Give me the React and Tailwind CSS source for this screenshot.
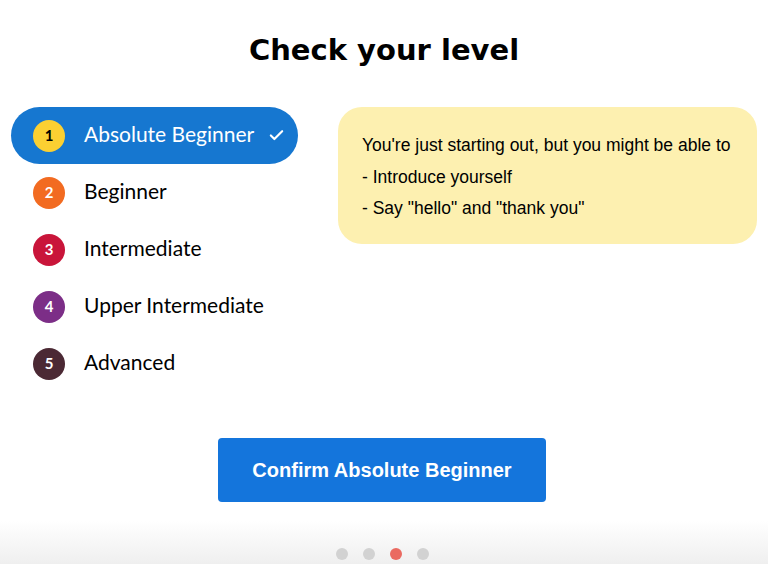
import React, { useState } from "react";
import { Check } from "lucide-react";

const levels = [
  { id: 1, name: "Absolute Beginner", color: "bg-[#fbd032]", num: "text-black" },
  { id: 2, name: "Beginner", color: "bg-[#f26b21]", num: "text-white" },
  { id: 3, name: "Intermediate", color: "bg-[#c9153a]", num: "text-white" },
  { id: 4, name: "Upper Intermediate", color: "bg-[#7c2e87]", num: "text-white" },
  { id: 5, name: "Advanced", color: "bg-[#4b2934]", num: "text-white" },
];

export default function App() {
  const [selected, setSelected] = useState(1);
  const current = levels.find((l) => l.id === selected);

  return (
    <div className="min-h-[564px] flex flex-col bg-white font-['Lato',sans-serif]">
      <h1 className="mt-[30px] text-center text-[29px] leading-[40px] font-bold text-black font-['DejaVu_Sans',sans-serif]">
        Check your level
      </h1>

      <div className="mt-[37px] flex gap-[40px] pl-[11px]">
        {/* Level list */}
        <ul className="w-[287px] flex flex-col">
          {levels.map((l) => {
            const active = l.id === selected;
            return (
              <li key={l.id}>
                <button
                  onClick={() => setSelected(l.id)}
                  className={`w-full h-[57px] flex items-center pl-[22px] pr-[13px] rounded-full text-left ${
                    active ? "bg-[#1677d0] text-white" : "text-black"
                  }`}
                >
                  <span
                    className={`w-[32px] h-[32px] rounded-full flex items-center justify-center text-[15px] font-bold shrink-0 ${l.color} ${l.num}`}
                  >
                    {l.id}
                  </span>
                  <span className="ml-[19px] mb-[5px] text-[21px] leading-none">{l.name}</span>
                  {active && <Check className="ml-auto w-[17px] h-[17px]" strokeWidth={3} />}
                </button>
              </li>
            );
          })}
        </ul>

        {/* Description */}
        <div className="w-[419px] h-[137px] self-start rounded-[24px] bg-[#fdf0b0] px-[24px] pt-[23px] font-['Liberation_Sans',Arial,sans-serif] text-[17.5px] leading-[31.5px] text-black">
          <p>You're just starting out, but you might be able to</p>
          <p>- Introduce yourself</p>
          <p>- Say "hello" and "thank you"</p>
        </div>
      </div>

      <div className="mt-[46px] flex justify-center pr-[4px]">
        <button className="w-[328px] h-[64px] rounded-[4px] bg-[#1475dc] text-white text-[20px] font-bold font-['Liberation_Sans',Arial,sans-serif]">
          Confirm {current.name}
        </button>
      </div>

      <div className="h-[62px] flex items-end justify-center gap-[15px] pb-[4px] pr-[4px] bg-linear-to-b from-white from-30% to-[#efefef]">
        <span className="w-[12px] h-[12px] rounded-full bg-[#d2d2d2]" />
        <span className="w-[12px] h-[12px] rounded-full bg-[#d2d2d2]" />
        <span className="w-[12px] h-[12px] rounded-full bg-[#ea6a61]" />
        <span className="w-[12px] h-[12px] rounded-full bg-[#d2d2d2]" />
      </div>
    </div>
  );
}
